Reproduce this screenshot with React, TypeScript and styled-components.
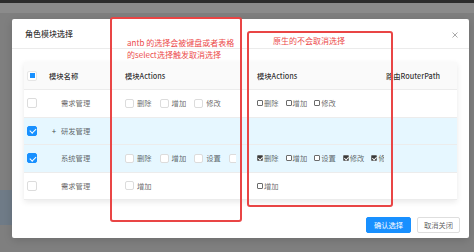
import React from "react";
import styled, { createGlobalStyle, css } from "styled-components";

const Global = createGlobalStyle`
  html, body { margin: 0; padding: 0; }
  body {
    width: 474px; height: 252px; overflow: hidden;
    font-family: "Noto Sans CJK SC", "Noto Sans", sans-serif;
  }
  * { box-sizing: border-box; }
`;

const Screen = styled.div`
  position: relative;
  width: 474px;
  height: 252px;
  overflow: hidden;
  padding: 19px 0 0 12px;
  background:
    linear-gradient(#6f7b87, #6f7b87) 0 190px / 12px 35px no-repeat,
    linear-gradient(to bottom, #2c2c2c 0 3px, #8b8b8b 3px 13px, #7f7f7f 13px);
`;

const Modal = styled.div`
  width: 457px;
  height: 219px;
  background: #fff;
  border-radius: 2px;
  display: flex;
  flex-direction: column;
  box-shadow: 0 2px 8px rgba(0, 0, 0, 0.15);
`;

const ModalHeader = styled.div`
  height: 30px;
  border-bottom: 1px solid #ebebeb;
  display: flex;
  align-items: center;
  justify-content: space-between;
  padding: 0 11px 0 13px;
`;

const Title = styled.div`
  font-size: 8px;
  color: rgba(0, 0, 0, 0.8);
  font-weight: 500;
`;

const Close = styled.svg`
  width: 6px;
  height: 6px;
  margin-top: 2px;
`;

const ModalBody = styled.div`
  padding: 13px 12px 0;
`;

const TableCard = styled.div`
  background: #fff;
  box-shadow: 0 2px 6px rgba(0, 0, 0, 0.09);
  display: flex;
  flex-direction: column;
`;

const Row = styled.div<{ $head?: boolean; $selected?: boolean }>`
  display: grid;
  grid-template-columns: 18px 76px 132px 134px 1fr;
  height: ${(p) => (p.$head ? "28px" : "27.5px")};
  border-bottom: 1px solid #ececec;
  background: ${(p) => (p.$head ? "#fafafa" : p.$selected ? "#e6f7ff" : "#fff")};
  font-size: 7.3px;
  color: ${(p) => (p.$head ? "rgba(0,0,0,0.82)" : "rgba(0,0,0,0.62)")};
  font-weight: ${(p) => (p.$head ? 500 : 400)};
`;

const Cell = styled.div<{ $pl?: number; $pr?: number }>`
  display: flex;
  align-items: center;
  min-width: 0;
  white-space: nowrap;
  padding: 0 ${(p) => p.$pr ?? 0}px 0 ${(p) => p.$pl ?? 7}px;
  overflow: hidden;
`;

const Clip = styled.div`
  display: flex;
  align-items: center;
  flex: 1;
  min-width: 0;
  overflow: hidden;
`;

const Indent = styled.span`
  display: inline-flex;
  width: 12px;
  justify-content: center;
  font-size: 8px;
  color: rgba(0, 0, 0, 0.75);
  padding-right: 2px;
`;

const AntBox = styled.span<{ $checked?: boolean; $size?: number }>`
  position: relative;
  display: inline-block;
  flex: none;
  width: ${(p) => p.$size ?? 9}px;
  height: ${(p) => p.$size ?? 9}px;
  border-radius: 2px;
  border: 1px solid ${(p) => (p.$checked ? "#1890ff" : "#dcdcdc")};
  background: ${(p) => (p.$checked ? "#1890ff" : "#fff")};
  ${(p) =>
    p.$checked &&
    css`
      &::after {
        content: "";
        position: absolute;
        left: 2.5px;
        top: 0.5px;
        width: 2.5px;
        height: 5px;
        border: solid #fff;
        border-width: 0 1.4px 1.4px 0;
        transform: rotate(45deg);
      }
    `}
`;

const Indeterminate = styled.span`
  display: inline-flex;
  align-items: center;
  justify-content: center;
  width: 10px;
  height: 10px;
  border-radius: 2px;
  border: 1px solid #e6e6e6;
  background: #fff;
  &::after {
    content: "";
    width: 5px;
    height: 5px;
    background: #1890ff;
  }
`;

const AntItem = styled.label`
  display: inline-flex;
  align-items: center;
  gap: 3px;
  margin-right: 8px;
  flex: none;
`;

const NativeBox = styled.span<{ $checked?: boolean }>`
  position: relative;
  display: inline-block;
  flex: none;
  width: 6px;
  height: 6px;
  border: 1px solid #6b6b6b;
  border-radius: 1px;
  background: ${(p) => (p.$checked ? "#3a3a3a" : "#fff")};
  ${(p) =>
    p.$checked &&
    css`
      &::after {
        content: "";
        position: absolute;
        left: 1px;
        top: -0.5px;
        width: 1.6px;
        height: 3px;
        border: solid #fff;
        border-width: 0 1px 1px 0;
        transform: rotate(45deg);
      }
    `}
`;

const NativeItem = styled.label`
  display: inline-flex;
  align-items: center;
  gap: 1px;
  margin-right: 7px;
  flex: none;
`;

const Footer = styled.div`
  margin-top: auto;
  display: flex;
  justify-content: flex-end;
  gap: 6px;
  padding: 0 9px 5px;
`;

const Button = styled.button<{ $primary?: boolean }>`
  height: 16px;
  padding: 0;
  width: ${(p) => (p.$primary ? 45 : 43)}px;
  font-family: inherit;
  font-size: 7.3px;
  border-radius: 2px;
  border: 1px solid ${(p) => (p.$primary ? "#1890ff" : "#dedede")};
  background: ${(p) => (p.$primary ? "#1890ff" : "#fff")};
  color: ${(p) => (p.$primary ? "#fff" : "rgba(0,0,0,0.65)")};
`;

const Annotation = styled.div<{ $x: number; $y: number; $w: number; $h: number; $pt: number; $pl: number }>`
  position: absolute;
  left: ${(p) => p.$x}px;
  top: ${(p) => p.$y}px;
  width: ${(p) => p.$w}px;
  height: ${(p) => p.$h}px;
  border: 2px solid #e94545;
  border-radius: 3px;
  padding: ${(p) => p.$pt}px 0 0 ${(p) => p.$pl}px;
  color: #ec4a4a;
  font-size: 8px;
  line-height: 12px;
  pointer-events: none;
`;

type Action = { label: string; checked?: boolean };

const AntActions = ({ items }: { items: Action[] }) => (
  <Clip>
    {items.map((a, i) => (
      <AntItem key={i}>
        <AntBox $checked={a.checked} />
        <span>{a.label}</span>
      </AntItem>
    ))}
  </Clip>
);

const NativeActions = ({ items }: { items: Action[] }) => (
  <Clip>
    {items.map((a, i) => (
      <NativeItem key={i}>
        <NativeBox $checked={a.checked} />
        <span>{a.label}</span>
      </NativeItem>
    ))}
  </Clip>
);

type RowData = {
  name: string;
  expand?: boolean;
  selected?: boolean;
  ant: Action[];
  native: Action[];
};

const rows: RowData[] = [
  {
    name: "需求管理",
    ant: [{ label: "删除" }, { label: "增加" }, { label: "修改" }],
    native: [{ label: "删除" }, { label: "增加" }, { label: "修改" }],
  },
  { name: "研发管理", expand: true, selected: true, ant: [], native: [] },
  {
    name: "系统管理",
    selected: true,
    ant: [{ label: "删除" }, { label: "增加" }, { label: "设置" }, { label: "修改" }],
    native: [
      { label: "删除", checked: true },
      { label: "增加" },
      { label: "设置" },
      { label: "修改", checked: true },
      { label: "修改", checked: true },
    ],
  },
  { name: "需求管理", ant: [{ label: "增加" }], native: [{ label: "增加" }] },
];

export default function App() {
  return (
    <>
      <Global />
      <Screen>
        <Modal>
          <ModalHeader>
            <Title>角色模块选择</Title>
            <Close viewBox="0 0 6 6">
              <path d="M0.5 0.5L5.5 5.5M5.5 0.5L0.5 5.5" stroke="#a0a0a0" strokeWidth="0.9" />
            </Close>
          </ModalHeader>
          <ModalBody>
            <TableCard>
              <Row $head>
                <Cell $pl={3}>
                  <Indeterminate />
                </Cell>
                <Cell>模块名称</Cell>
                <Cell>模块Actions</Cell>
                <Cell>模块Actions</Cell>
                <Cell $pl={2}>路由RouterPath</Cell>
              </Row>
              {rows.map((r, i) => (
                <Row key={i} $selected={r.selected}>
                  <Cell $pl={3}>
                    <AntBox $size={10} $checked={r.selected} />
                  </Cell>
                  <Cell>
                    <Indent>{r.expand ? "+" : ""}</Indent>
                    {r.name}
                  </Cell>
                  <Cell $pr={14}>
                    <AntActions items={r.ant} />
                  </Cell>
                  <Cell>
                    <NativeActions items={r.native} />
                  </Cell>
                  <Cell />
                </Row>
              ))}
            </TableCard>
          </ModalBody>
          <Footer>
            <Button $primary>确认选择</Button>
            <Button>取消关闭</Button>
          </Footer>
        </Modal>
        <Annotation $x={110} $y={17} $w={132} $h={205} $pt={18} $pl={15}>
          antb 的选择会被键盘或者表格
          <br />
          的select选择触发取消选择
        </Annotation>
        <Annotation $x={247} $y={31} $w={146} $h={176} $pt={2} $pl={24}>
          原生的不会取消选择
        </Annotation>
      </Screen>
    </>
  );
}
